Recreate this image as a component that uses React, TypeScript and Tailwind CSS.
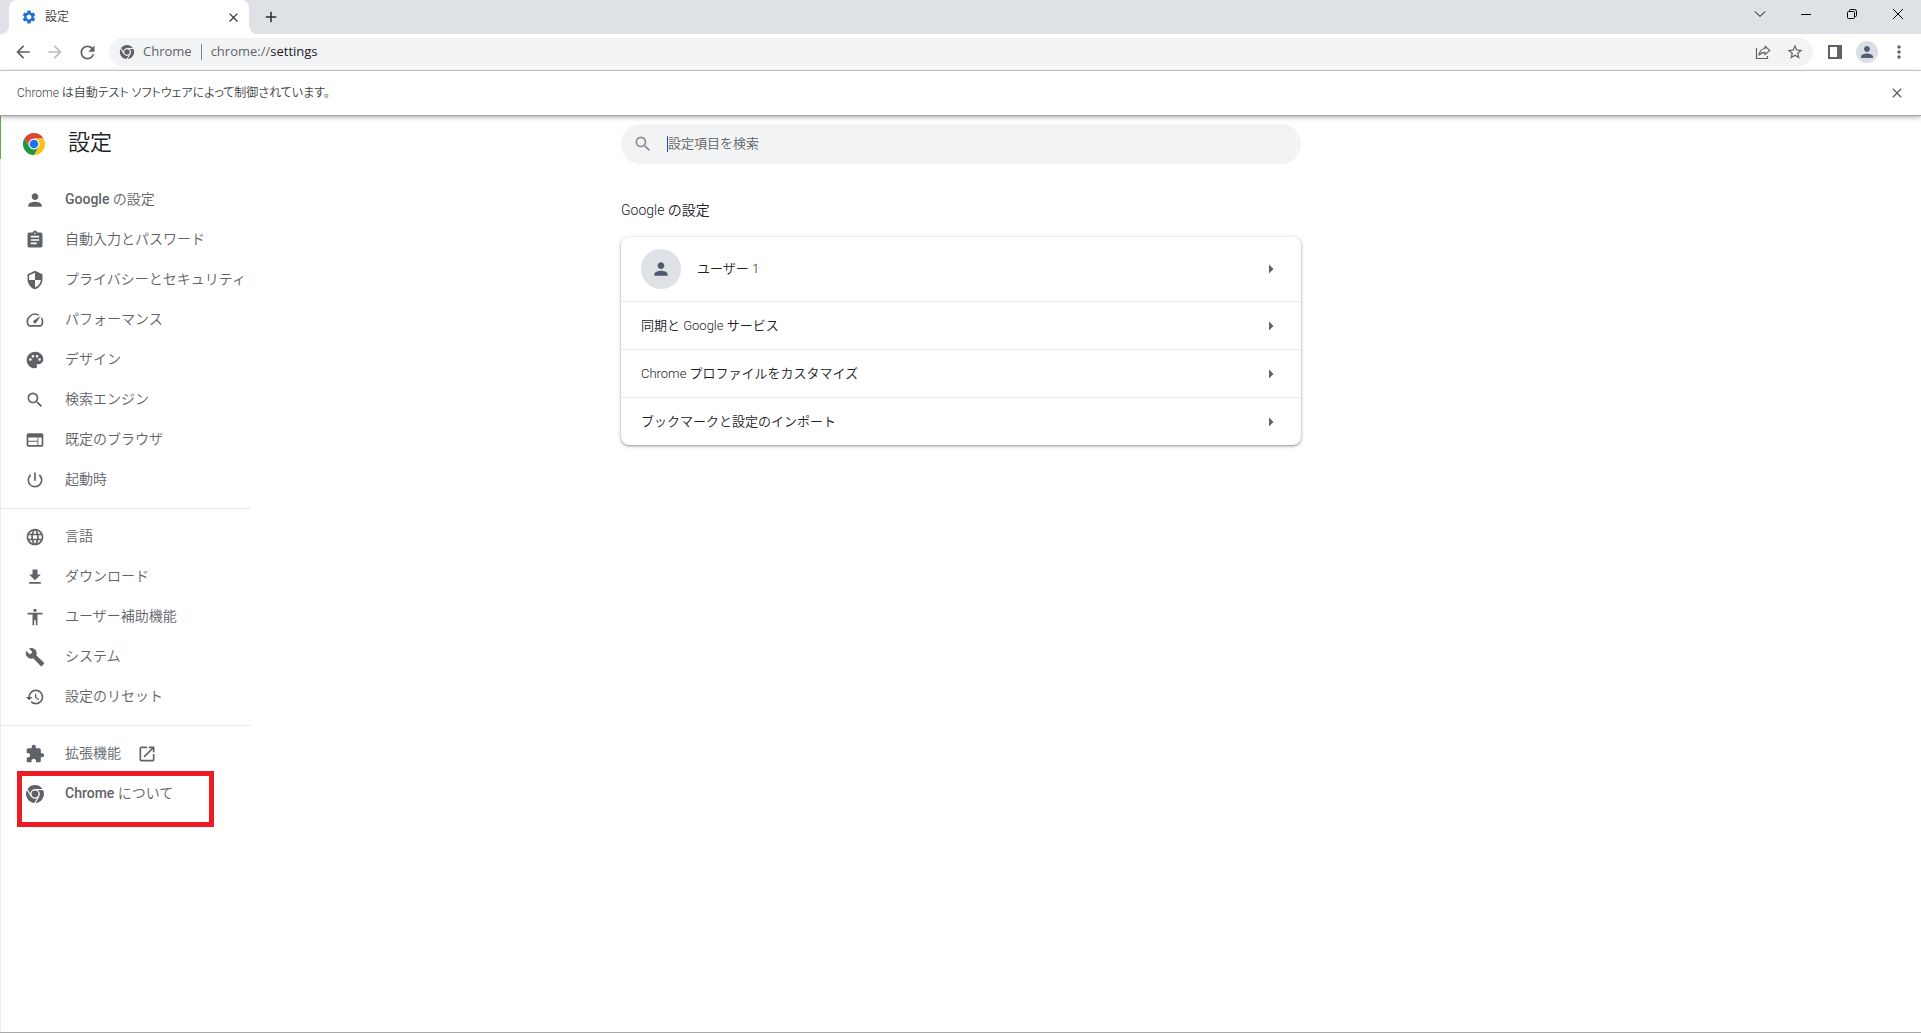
import type { ReactNode } from "react";
import type { IconType } from "react-icons";
import {
  MdAccessibility,
  MdAdd,
  MdArrowBack,
  MdArrowForward,
  MdAssignment,
  MdBuild,
  MdClose,
  MdExtension,
  MdFileDownload,
  MdHistory,
  MdLanguage,
  MdMoreVert,
  MdOpenInNew,
  MdPalette,
  MdPerson,
  MdPowerSettingsNew,
  MdRefresh,
  MdSearch,
  MdSecurity,
  MdSettings,
  MdSpeed,
  MdStarBorder,
  MdWeb,
} from "react-icons/md";

const RED_ARC =
  "M24 12h20.78a23.994 23.994 0 0 0-41.564.003L13.608 30l.01-.002A11.985 11.985 0 0 1 24 12Z";
const YELLOW_ARC =
  "M34.391 30.003 24 48a23.994 23.994 0 0 0 20.78-35.997H24l-.003.01a11.985 11.985 0 0 1 10.394 17.99Z";
const GREEN_ARC =
  "M13.609 30.003 3.218 12.006A23.994 23.994 0 0 0 24.003 48l10.39-17.997-.007-.007a11.985 11.985 0 0 1-20.777.007Z";

function ChromeLogo() {
  return (
    <svg viewBox="0 0 48 48" className="size-[22px]" aria-hidden="true">
      <circle cx="24" cy="24" r="12" fill="#fff" />
      <path d={RED_ARC} fill="#db4437" />
      <path d={YELLOW_ARC} fill="#fbc116" />
      <path d={GREEN_ARC} fill="#229342" />
      <circle cx="24" cy="24" r="9.5" fill="#1a73e8" />
    </svg>
  );
}

/** Single-colour Chrome mark, used in the address bar and the menu */
function ChromeMono({ size = 20 }: { size?: number }) {
  return (
    <svg viewBox="-3 -3 54 54" width={size} height={size} fill="currentColor" aria-hidden="true">
      <path d={RED_ARC} />
      <path d={YELLOW_ARC} />
      <path d={GREEN_ARC} />
      <g stroke="#fff" strokeWidth="3">
        <path d="M24 12h22" />
        <path d="M24 12h22" transform="rotate(120 24 24)" />
        <path d="M24 12h22" transform="rotate(240 24 24)" />
      </g>
      <circle cx="24" cy="24" r="11" stroke="#fff" strokeWidth="3.4" />
    </svg>
  );
}

/** Menu labels: Latin words are medium, the Japanese part stays light */
function NavLabel({ text }: { text: string }) {
  return text.split(/([A-Za-z]+)/).map((part, idx) =>
    idx % 2 === 1 ? (
      <span key={idx} className="font-medium">
        {part}
      </span>
    ) : (
      part
    ),
  );
}

type NavItem = { label: string; icon: IconType | typeof ChromeMono; external?: boolean; marked?: boolean };

const NAV_GROUPS: NavItem[][] = [
  [
    { label: "Google の設定", icon: MdPerson },
    { label: "自動入力とパスワード", icon: MdAssignment },
    { label: "プライバシーとセキュリティ", icon: MdSecurity },
    { label: "パフォーマンス", icon: MdSpeed },
    { label: "デザイン", icon: MdPalette },
    { label: "検索エンジン", icon: MdSearch },
    { label: "既定のブラウザ", icon: MdWeb },
    { label: "起動時", icon: MdPowerSettingsNew },
  ],
  [
    { label: "言語", icon: MdLanguage },
    { label: "ダウンロード", icon: MdFileDownload },
    { label: "ユーザー補助機能", icon: MdAccessibility },
    { label: "システム", icon: MdBuild },
    { label: "設定のリセット", icon: MdHistory },
  ],
  [
    { label: "拡張機能", icon: MdExtension, external: true },
    { label: "Chrome について", icon: ChromeMono, marked: true },
  ],
];

const PROFILE_ROWS = [
  "同期と Google サービス",
  "Chrome プロファイルをカスタマイズ",
  "ブックマークと設定のインポート",
];

function IconButton({ label, className = "", children }: { label: string; className?: string; children: ReactNode }) {
  return (
    <button type="button" aria-label={label} className={`flex shrink-0 items-center justify-center ${className}`}>
      {children}
    </button>
  );
}

function TabStrip() {
  return (
    <div className="flex h-[34px] bg-[#dee1e6]">
      <div className="w-[9px] bg-white">
        <div className="h-full rounded-br-lg bg-[#dee1e6]" />
      </div>
      <div className="bg-[#dee1e6]">
        <div className="flex h-full w-60 items-center rounded-t-lg bg-white pr-2 pl-3">
          <MdSettings size={16} className="text-[#1f6fdc]" />
          <span className="ml-2 flex-1 text-[12px] font-[350] text-[#3c4043]">設定</span>
          <IconButton label="タブを閉じる" className="size-4 text-[#3c4043]">
            <MdClose size={15} />
          </IconButton>
        </div>
      </div>
      <div className="w-2 bg-white">
        <div className="h-full rounded-bl-lg bg-[#dee1e6]" />
      </div>
      <IconButton label="新しいタブ" className="w-7 text-[#2b2d30]">
        <MdAdd size={18} />
      </IconButton>
      <div className="ml-auto flex h-7 text-black">
        <IconButton label="タブを検索" className="w-[46px]">
          <svg viewBox="0 0 12 12" className="size-3" fill="none" stroke="currentColor">
            <path d="M1 3.5 6 8.5l5-5" />
          </svg>
        </IconButton>
        <IconButton label="最小化" className="w-[46px]">
          <svg viewBox="0 0 10 10" className="size-[10px]" fill="none" stroke="currentColor">
            <path d="M0 5.5h10" />
          </svg>
        </IconButton>
        <IconButton label="元に戻す" className="w-[46px]">
          <svg viewBox="0 0 10 10" className="size-[10px]" fill="none" stroke="currentColor">
            <rect x="0.5" y="2.5" width="7" height="7" rx="1" />
            <path d="M2.5 2V1.5a1 1 0 0 1 1-1h4a2 2 0 0 1 2 2v4a1 1 0 0 1-1 1H8" />
          </svg>
        </IconButton>
        <IconButton label="閉じる" className="w-[46px]">
          <svg viewBox="0 0 10 10" className="size-[10px]" fill="none" stroke="currentColor">
            <path d="M0 0l10 10M10 0 0 10" />
          </svg>
        </IconButton>
      </div>
    </div>
  );
}

function Toolbar() {
  return (
    <div className="flex h-[37px] items-center border-b border-[#d5d7da] pr-[6px] pl-[7px] text-[#5f6368]">
      <IconButton label="戻る" className="size-8">
        <MdArrowBack size={20} />
      </IconButton>
      <IconButton label="進む" className="size-8 text-[#babcbe]">
        <MdArrowForward size={20} />
      </IconButton>
      <IconButton label="再読み込み" className="size-8">
        <MdRefresh size={21} />
      </IconButton>
      <div className="ml-[6px] flex h-7 flex-1 items-center rounded-full bg-[#f1f3f4] pr-[6px] pl-[10px] font-['Open_Sans'] text-[13px]">
        <ChromeMono size={16} />
        <span className="ml-2">Chrome</span>
        <span className="mx-[9px] h-4 w-px bg-[#80868b]" />
        <div className="flex-1">
          chrome://<span className="text-[#202124]">settings</span>
        </div>
        <IconButton label="共有" className="w-6">
          <svg viewBox="0 0 16 16" className="size-4" fill="none" stroke="currentColor" strokeWidth="1.2">
            <path d="M1.5 4v10.5h11V12" />
            <path d="M10 2.2 14.8 6.4 10 10.6V8.3C7.2 8.3 5.3 9.2 3.9 11.2 4.4 8 6.2 5 10 4.5Z" strokeLinejoin="round" />
          </svg>
        </IconButton>
        <IconButton label="ブックマーク" className="ml-2 w-6">
          <MdStarBorder size={18} />
        </IconButton>
      </div>
      <IconButton label="サイドパネル" className="ml-[6px] size-8">
        <svg viewBox="0 0 14 14" className="size-[14px]">
          <path d="M0 0h14v14H0zM2 2v10h7V2z" fill="currentColor" fillRule="evenodd" />
        </svg>
      </IconButton>
      <IconButton label="ユーザー 1" className="size-8">
        <span className="flex size-[22px] items-center justify-center rounded-full bg-[#dadfe5] text-[#565f75]">
          <MdPerson size={18} />
        </span>
      </IconButton>
      <IconButton label="メニュー" className="size-8">
        <MdMoreVert size={20} />
      </IconButton>
    </div>
  );
}

function InfoBar() {
  return (
    <div className="z-10 flex h-[45px] items-center justify-between border-b border-[#a3a3a3] bg-white pr-4 pl-[17px] text-[#3c4043] shadow-[0_1px_5px_rgba(0,0,0,0.35)]">
      <p className="text-[12px] leading-5 font-[350] [font-feature-settings:'palt']">
        Chrome は自動テスト ソフトウェアによって制御されています。
      </p>
      <IconButton label="閉じる" className="size-4 text-[#5f6368]">
        <MdClose size={18} />
      </IconButton>
    </div>
  );
}

function NavLink({ item }: { item: NavItem }) {
  const Icon = item.icon;
  return (
    <a href="#" className="relative flex h-10 items-center gap-5 pl-6 text-sm font-[350] text-[#5f6368]">
      <Icon size={20} />
      <span className="pb-[2px]">
        <NavLabel text={item.label} />
      </span>
      {item.external && <MdOpenInNew size={20} className="-ml-1" />}
      {item.marked && (
        <span className="absolute -top-[3px] left-4 h-14 w-[197px] border-[5px] border-[#ec1c24]" />
      )}
    </a>
  );
}

function Sidebar() {
  return (
    <aside>
      <div className="flex h-10 items-center gap-[23px] pl-[22px]">
        <ChromeLogo />
        <h1 className="pb-[2px] text-[22px] leading-8 font-[350] text-[#202124]">設定</h1>
      </div>
      <nav className="mt-4 w-[250px]">
        {NAV_GROUPS.map((group, idx) => (
          <div key={idx}>
            {idx > 0 && <hr className="my-2 border-[#e8eaed]" />}
            {group.map((item) => (
              <NavLink key={item.label} item={item} />
            ))}
          </div>
        ))}
      </nav>
    </aside>
  );
}

function RowArrow() {
  return (
    <svg viewBox="0 0 5 10" className="mr-[27px] ml-auto h-[10px] w-[5px]" fill="#5f6368" aria-hidden="true">
      <path d="M0 0.5 4.5 5 0 9.5z" />
    </svg>
  );
}

function SettingsMain() {
  return (
    <main className="font-[350] text-[#202124]">
      <label className="flex h-10 items-center rounded-full bg-[#f1f3f4] pl-3">
        <MdSearch size={20} className="text-[#8a8d91]" />
        <span className="ml-[14px] h-4 w-px bg-[#1a56b0]" />
        <input
          type="text"
          aria-label="設定項目を検索"
          placeholder="設定項目を検索"
          className="min-w-0 flex-1 bg-transparent pb-px text-[13px] outline-none placeholder:text-[#5f6368]"
        />
      </label>
      <h2 className="mt-9 mb-[17px] text-sm">Google の設定</h2>
      <div className="rounded-lg text-[13px] shadow-[0_1px_2px_rgba(60,64,67,0.4),0_1px_4px_rgba(60,64,67,0.25)]">
        <button type="button" className="flex h-16 w-full items-center pl-5">
          <span className="flex size-10 items-center justify-center rounded-full bg-[#dee1e6] text-[#4f5a6b]">
            <MdPerson size={20} />
          </span>
          <span className="ml-4">ユーザー 1</span>
          <RowArrow />
        </button>
        {PROFILE_ROWS.map((row) => (
          <button type="button" key={row} className="flex h-12 w-full items-center border-t border-[#e8eaed] pl-5">
            {row}
            <RowArrow />
          </button>
        ))}
      </div>
    </main>
  );
}

export default function App() {
  return (
    <div className="flex min-h-screen flex-col border-b border-[#a8a8a8] bg-white font-[Roboto,'Noto_Sans_CJK_JP',sans-serif]">
      <TabStrip />
      <Toolbar />
      <InfoBar />
      <div className="relative grid flex-1 grid-cols-[minmax(250px,1fr)_minmax(0,680px)_minmax(0,1fr)] items-start border-l border-[#ececec] pt-2">
        <Sidebar />
        <SettingsMain />
        <span className="absolute top-0 -left-px h-[43px] w-px bg-[#6aa842]" />
      </div>
    </div>
  );
}
